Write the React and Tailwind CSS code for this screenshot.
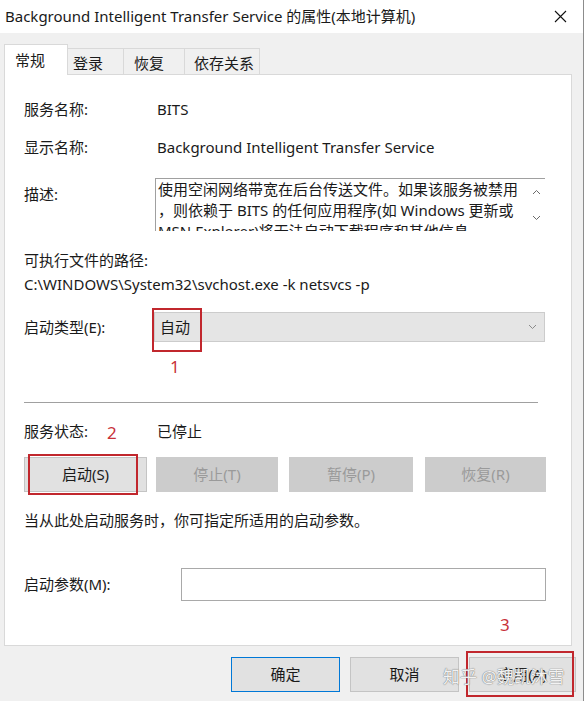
const Chevron = ({ up, className }) => (
  <svg width="9" height="6" viewBox="0 0 9 6" className={className}>
    <path
      d={up ? 'M1 5 L4.5 1.5 L8 5' : 'M1 1 L4.5 4.5 L8 1'}
      fill="none"
      stroke="currentColor"
      strokeWidth="1"
    />
  </svg>
);

const Btn = ({ children, w, disabled, primary, className = '' }) => (
  <div
    className={`h-[35px] ${w} flex items-center justify-center text-[15px] border ${
      disabled
        ? 'bg-[#cccccc] border-[#cccccc] text-[#9a9a9a]'
        : primary
        ? 'bg-[#e1e1e1] border-[#0078d7] text-[#1a1a1a]'
        : 'bg-[#e1e1e1] border-[#c4c4c4] text-[#1a1a1a]'
    } ${className}`}
  >
    {children}
  </div>
);

export default function App() {
  return (
    <div className="w-[587px] h-[701px] bg-white overflow-hidden relative font-['Noto_Sans','Noto_Sans_CJK_SC',sans-serif] text-[#1a1a1a]">
      <div className="w-[584px] h-full bg-[#f0f0f0] border-r border-[#8c8c8c] flex flex-col">

        {/* Title bar */}
        <div className="h-[33px] bg-white flex items-center justify-between pl-[5px] pr-[16px] shrink-0">
          <span className="text-[15px] whitespace-nowrap">
            Background Intelligent Transfer Service 的属性(本地计算机)
          </span>
          <svg width="13" height="13" viewBox="0 0 13 13">
            <path d="M1 1 L12 12 M12 1 L1 12" stroke="#111" strokeWidth="1.1" />
          </svg>
        </div>

        {/* Tabs */}
        <div className="mt-[11px] h-[31px] -mb-px pl-[4px] flex items-end relative z-10 text-[15px] shrink-0">
          <div className="h-[31px] w-[64px] bg-white border border-b-0 border-[#d9d9d9] pl-[10px] pt-[4px]">
            常规
          </div>
          <div className="h-[27px] w-[56px] border border-l-0 border-[#d9d9d9] bg-[#f0f0f0] pl-[5px] pt-[3px]">
            登录
          </div>
          <div className="h-[27px] w-[61px] border border-l-0 border-[#d9d9d9] bg-[#f0f0f0] pl-[10px] pt-[3px]">
            恢复
          </div>
          <div className="h-[27px] w-[75px] border border-l-0 border-[#d9d9d9] bg-[#f0f0f0] pl-[9px] pt-[3px]">
            依存关系
          </div>
        </div>

        {/* Panel */}
        <div className="ml-[4px] w-[568px] h-[572px] bg-white border border-[#d9d9d9] pl-[19px] flex flex-col text-[15px] shrink-0">
          <div className="mt-[24px] h-[20px] leading-[20px] flex">
            <span className="w-[133px]">服务名称:</span>
            <span>BITS</span>
          </div>
          <div className="mt-[18px] h-[20px] leading-[20px] flex">
            <span className="w-[133px]">显示名称:</span>
            <span>Background Intelligent Transfer Service</span>
          </div>

          <div className="mt-[21px] flex items-start">
            <span className="w-[131px] mt-[6px] leading-[20px]">描述:</span>
            <div className="w-[390px] h-[53px] border-t border-l border-[#a0a0a0] flex">
              <div className="flex-1 h-full overflow-hidden pl-[2px] leading-[21px] whitespace-nowrap">
                <div>使用空闲网络带宽在后台传送文件。如果该服务被禁用</div>
                <div>，则依赖于 BITS 的任何应用程序(如 Windows 更新或</div>
                <div>MSN Explorer)将无法自动下载程序和其他信息。</div>
              </div>
              <div className="w-[18px] h-full flex flex-col items-center justify-between py-[10px] text-[#6a6a6a]">
                <Chevron up />
                <Chevron />
              </div>
            </div>
          </div>

          <div className="mt-[19px] h-[20px] leading-[20px]">可执行文件的路径:</div>
          <div className="mt-[4px] h-[20px] leading-[20px]">
            C:\WINDOWS\System32\svchost.exe -k netsvcs -p
          </div>

          <div className="mt-[18px] flex items-center">
            <span className="w-[130px]">启动类型(E):</span>
            <div className="relative w-[391px] h-[30px] bg-[#e5e5e5] border border-[#cccccc] flex items-center justify-between pl-[5px] pr-[7px]">
              <span>自动</span>
              <Chevron className="text-[#8a8a8a]" />
              <div className="absolute -left-[3px] -top-[5px] w-[50px] h-[44px] border-2 border-[#c1272d]" />
            </div>
          </div>

          <div className="mt-[15px] ml-[146px] h-[20px] leading-[20px] text-[17px] text-[#c8323a]">1</div>

          <div className="mt-[25px] w-[514px] h-px bg-[#a0a0a0]" />

          <div className="mt-[18px] h-[20px] leading-[20px] flex items-center">
            <span className="w-[83px]">服务状态:</span>
            <span className="w-[50px] text-[17px] text-[#c8323a] mt-[3px]">2</span>
            <span>已停止</span>
          </div>

          <div className="mt-[16px] flex">
            <div className="relative">
              <Btn w="w-[123px]">启动(S)</Btn>
              <div className="absolute left-[4px] -top-[3px] w-[110px] h-[41px] border-2 border-[#c1272d]" />
            </div>
            <Btn w="w-[122px]" disabled className="ml-[9px]">停止(T)</Btn>
            <Btn w="w-[124px]" disabled className="ml-[11px]">暂停(P)</Btn>
            <Btn w="w-[121px]" disabled className="ml-[12px]">恢复(R)</Btn>
          </div>

          <div className="mt-[18px] h-[20px] leading-[20px]">
            当从此处启动服务时，你可指定所适用的启动参数。
          </div>

          <div className="mt-[38px] flex items-center">
            <span className="w-[157px]">启动参数(M):</span>
            <div className="w-[365px] h-[33px] border border-[#a9a9a9] bg-white" />
          </div>

          <div className="mt-[14px] ml-[476px] h-[20px] leading-[20px] text-[17px] text-[#c8323a]">3</div>
        </div>

        {/* Bottom buttons */}
        <div className="mt-[11px] pl-[231px] flex">
          <Btn w="w-[109px]" primary>确定</Btn>
          <Btn w="w-[109px]" className="ml-[10px]">取消</Btn>
          <div className="relative ml-[10px]">
            <Btn w="w-[107px]">应用(A)</Btn>
            <div className="absolute -left-[3px] -top-[6px] w-[108px] h-[46px] border-2 border-[#c1272d]" />
          </div>
        </div>
      </div>

      {/* Watermark */}
      <div className="absolute left-[443px] top-[664px] text-[17px] text-white/90 whitespace-nowrap [text-shadow:0_0_1px_#777,0_0_1px_#777]">
        知乎 @魏凯沐雪
      </div>
    </div>
  );
}
